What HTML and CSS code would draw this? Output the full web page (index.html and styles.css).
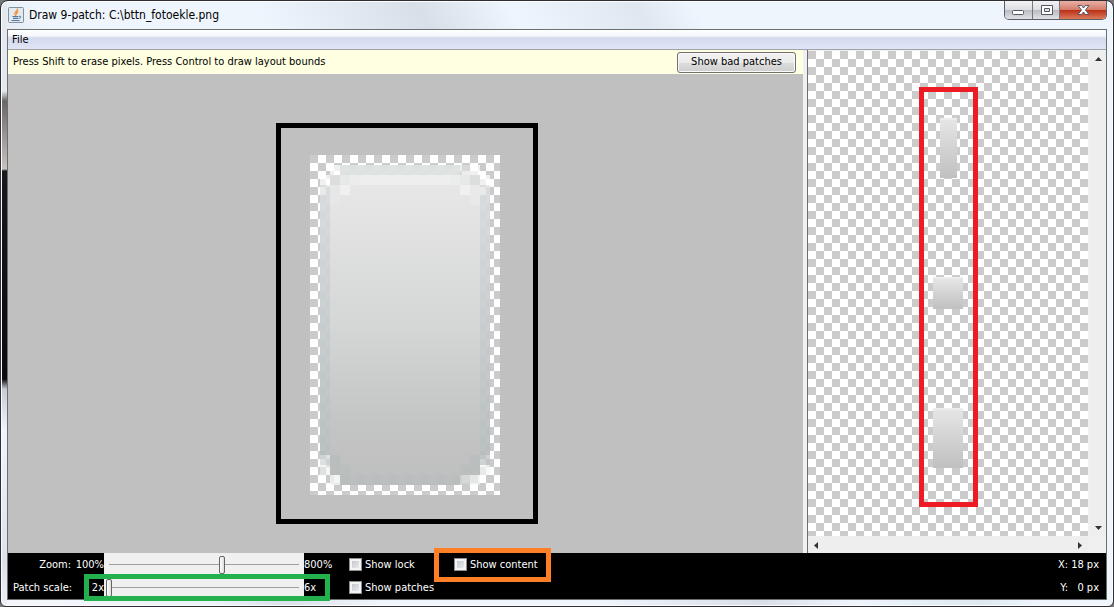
FILE: index.html
```html
<!DOCTYPE html>
<html lang="en">
<head>
  <meta charset="UTF-8">
  <title>Draw 9-patch: C:\bttn_fotoekle.png</title>
  <link rel="stylesheet" href="styles.css">
</head>
<body>
  <div class="window">
    <header class="titlebar">
      <svg class="app-icon" viewBox="0 0 16 16" width="16" height="16">
        <rect x="0.5" y="0.5" width="15" height="15" rx="1" fill="#e4ebf0" stroke="#7d92a3"/>
        <path d="M9.500 1.500C10.500 4 5.500 5 7 7.500L8 9M10.500 4.500C8 5.500 8.500 6.500 9 7.500" fill="none" stroke="#f08a24" stroke-width="1.300"/>
        <path d="M4.500 9.500h6M5 11.300h5M3.500 13.500h8" fill="none" stroke="#50789a" stroke-width="1.200"/>
        <path d="M11 9.300c2.500-.6 2.500 2-.5 2.200" fill="none" stroke="#50789a"/>
      </svg>
      <h1>Draw 9-patch: C:\bttn_fotoekle.png</h1>
      <div class="window-buttons">
        <button class="minimize" aria-label="Minimize">
          <svg viewBox="0 0 13 11" width="13" height="11"><rect x="0.500" y="5.500" width="11" height="4" rx="1" fill="#fff" stroke="#535666"/></svg>
        </button>
        <button class="maximize" aria-label="Maximize">
          <svg viewBox="0 0 13 11" width="13" height="11"><path d="M1.500 0.500h11v9h-11z" fill="#fff" stroke="#535666"/><path d="M4.500 3.500h5v3h-5z" fill="#dfe3ea" stroke="#535666"/></svg>
        </button>
        <button class="close" aria-label="Close">
          <svg viewBox="0 0 13 11" width="13" height="11"><path d="M1 .5h3.500L6.500 3 8.500.5H12L8.500 5l3.500 4.500H8.500L6.500 7l-2 2.500H1L4.500 5z" fill="#fff" stroke="#535666"/></svg>
        </button>
      </div>
    </header>

    <div class="client">
      <nav class="menubar">
        <button>File</button>
      </nav>

      <main class="workspace">
        <section class="editor">
          <div class="hint">
            <p>Press Shift to erase pixels. Press Control to draw layout bounds</p>
            <button class="bad-patches">Show bad patches</button>
          </div>
          <div class="stage">
            <div class="canvas checker">
              <svg viewBox="0 0 19 34" width="190" height="340" shape-rendering="crispEdges">
                <defs>
                  <linearGradient id="body" x1="0" y1="0" x2="0" y2="1">
                    <stop offset="0" stop-color="#e7e7e7"/>
                    <stop offset="0.500" stop-color="#d5d6d6"/>
                    <stop offset="0.850" stop-color="#c3c5c4"/>
                    <stop offset="1" stop-color="#c0c0c0"/>
                  </linearGradient>
                  <linearGradient id="edge" x1="0" y1="0" x2="0" y2="1">
                    <stop offset="0" stop-color="#d7dbdd"/>
                    <stop offset="1" stop-color="#b8bdbe"/>
                  </linearGradient>
                </defs>
                <!-- body and side edges -->
                <rect x="2" y="3" width="15" height="28" fill="url(#body)"/>
                <rect x="1" y="4" width="1" height="26" fill="url(#edge)" opacity="0.950"/>
                <rect x="17" y="4" width="1" height="26" fill="url(#edge)" opacity="0.950"/>
                <!-- top -->
                <rect x="3" y="1" width="12" height="1" fill="#dde1df" opacity="0.950"/>
                <rect x="2" y="1" width="1" height="1" fill="#fff" opacity="0.700"/>
                <rect x="15" y="1" width="1" height="1" fill="#e0e3e2" opacity="0.600"/>
                <rect x="16" y="1" width="1" height="1" fill="#fff" opacity="0.700"/>
                <rect x="2" y="2" width="15" height="1" fill="#dcdedd"/>
                <rect x="3" y="2" width="13" height="1" fill="#e6e9e8"/>
                <rect x="4" y="2" width="11" height="1" fill="#ebeded"/>
                <rect x="5" y="2" width="9" height="1" fill="#eee"/>
                <rect x="1" y="2" width="1" height="1" fill="#fff" opacity="0.700"/>
                <rect x="17" y="2" width="1" height="1" fill="#fff" opacity="0.700"/>
                <rect x="1" y="3" width="1" height="1" fill="#e0e2e1" opacity="0.700"/>
                <rect x="17" y="3" width="1" height="1" fill="#e0e2e1" opacity="0.700"/>
                <rect x="2" y="3" width="1" height="2" fill="#e6e7e7"/>
                <rect x="16" y="3" width="1" height="2" fill="#e9e9e9"/>
                <rect x="3" y="3" width="1" height="1" fill="#f0f0f0"/>
                <rect x="15" y="3" width="1" height="1" fill="#f0f0f0"/>
                <!-- bottom -->
                <rect x="1" y="30" width="1" height="1" fill="#d0d4d4" opacity="0.700"/>
                <rect x="17" y="30" width="1" height="1" fill="#bcc0c0" opacity="0.700"/>
                <rect x="2" y="30" width="1" height="2" fill="#b9bebd"/>
                <rect x="16" y="30" width="1" height="1" fill="#babebe"/>
                <rect x="1" y="31" width="1" height="1" fill="#ecf0ee" opacity="0.600"/>
                <rect x="3" y="31" width="13" height="1" fill="#bfc0c0"/>
                <rect x="3" y="31" width="1" height="1" fill="#babebc"/>
                <rect x="15" y="31" width="2" height="1" fill="#babebd"/>
                <rect x="17" y="31" width="1" height="1" fill="#f4f6f5" opacity="0.700"/>
                <rect x="2" y="32" width="1" height="1" fill="#f0f4f2" opacity="0.800"/>
                <rect x="3" y="32" width="12" height="1" fill="#b7bcbc" opacity="0.950"/>
                <rect x="15" y="32" width="1" height="1" fill="#ccd0ce" opacity="0.800"/>
                <rect x="16" y="32" width="1" height="1" fill="#eef2f0" opacity="0.700"/>
              </svg>
              <div class="mark mark-black"></div>
            </div>
          </div>
        </section>

        <section class="preview">
          <div class="preview-area checker">
            <div class="patch patch-tall"></div>
            <div class="patch patch-wide"></div>
            <div class="patch patch-both"></div>
            <div class="mark mark-red"></div>
          </div>
          <div class="scroll scroll-y">
            <button aria-label="Scroll up"><svg viewBox="0 0 7 4" width="7" height="4"><path d="M0 4L3.500 0 7 4z"/></svg></button>
            <button aria-label="Scroll down"><svg viewBox="0 0 7 4" width="7" height="4"><path d="M0 0h7L3.500 4z"/></svg></button>
          </div>
          <div class="scroll scroll-x">
            <button aria-label="Scroll left"><svg viewBox="0 0 4 7" width="4" height="7"><path d="M4 0v7L0 3.500z"/></svg></button>
            <button aria-label="Scroll right"><svg viewBox="0 0 4 7" width="4" height="7"><path d="M0 0l4 3.500L0 7z"/></svg></button>
          </div>
        </section>
      </main>

      <footer class="controls">
        <div class="sliders">
          <label for="zoom">Zoom:</label>
          <span class="min">100%</span>
          <div class="slider"><input type="range" id="zoom" min="100" max="800" value="518"></div>
          <span>800%</span>
          <label for="scale">Patch scale:</label>
          <span class="min">2x</span>
          <div class="slider"><input type="range" id="scale" min="2" max="6" value="2"></div>
          <span>6x</span>
          <div class="mark mark-green"></div>
        </div>
        <div class="checks">
          <label><input type="checkbox">Show lock</label>
          <label><input type="checkbox">Show content<span class="mark mark-orange"></span></label>
          <label><input type="checkbox">Show patches</label>
        </div>
        <div class="position">
          <span>X:</span><span>18 px</span>
          <span>Y:</span><span>0 px</span>
        </div>
      </footer>
    </div>
  </div>
</body>
</html>
```
FILE: styles.css
```css
* {
  box-sizing: border-box;
}

body {
  margin: 0;
  background: #777;
  color: #000;
  font-family: "DejaVu Sans Condensed", "Noto Sans", sans-serif;
  font-size: 11px;
  line-height: 14px;
}

button {
  font: inherit;
  color: inherit;
  padding: 0;
  border: none;
  background: none;
}

.window {
  height: 100vh;
  display: flex;
  flex-direction: column;
  padding: 0 6px 6px;
  border: 1px solid #2e2e33;
  border-radius: 8px 8px 6px 6px;
  background:
    linear-gradient(#e4e9ef 0, #e4e9ef 90px, #6b6666 100px, #c9c3bf 168px, #1c181b 170px, #0b0a0e 378px, #c6cad6 388px, #f0f4fd 430px, #dde1e9 560px, #eef2f8 607px) left / 6px 100% no-repeat,
    linear-gradient(60deg, #f4f6fa 0, #eef4fc 180px, #dde2ea 250px, #eef5fd 330px, #eef5fd 520px, #d8dfe8 660px, #eef5fd 740px, #dfe7f0 850px, #eef5fd 900px);
  box-shadow: inset 0 0 0 1px #fbfcff;
}

.titlebar {
  height: 28px;
  display: flex;
  align-items: center;
  padding-left: 1px;
}

.titlebar h1 {
  flex: 1;
  margin: 0 0 0 5px;
  font-size: 12px;
  font-weight: normal;
  line-height: 16px;
}

.window-buttons {
  align-self: flex-start;
  display: flex;
  height: 19px;
  border: 1px solid #5c5f69;
  border-top: none;
  border-radius: 0 0 5px 5px;
  overflow: hidden;
}

.window-buttons button {
  width: 28px;
  display: flex;
  align-items: center;
  justify-content: center;
  border-right: 1px solid #73767f;
  background: linear-gradient(#f2f2f4 0, #dcdde0 50%, #b9bbc1 50%, #dfe1e6 100%);
}

.window-buttons .maximize {
  width: 27px;
}

.window-buttons .close {
  width: 46px;
  border-right: none;
  background: linear-gradient(#e9b1a4 0, #d37a68 50%, #b92d15 50%, #dd7a5c 100%);
}

.client {
  flex: 1;
  min-height: 0;
  display: flex;
  flex-direction: column;
  border: 1px solid #6c6f70;
}

.menubar {
  height: 20px;
  padding: 0 4px;
  border-bottom: 1px solid #a0a2a8;
  background: linear-gradient(#fff 0, #f4f6fb 6px, #d4daed 8px, #e1e6f6 100%);
}

.menubar button {
  height: 19px;
}

.workspace {
  flex: 1;
  min-height: 0;
  display: flex;
  background: #f0f0f0;
}

.editor {
  flex: 1;
  display: flex;
  flex-direction: column;
}

.hint {
  height: 24px;
  display: flex;
  align-items: center;
  justify-content: space-between;
  padding: 0 7px 0 5px;
  background: #ffffe1;
}

.hint p {
  margin: 0;
  line-height: 16px;
}

.bad-patches {
  width: 119px;
  height: 21px;
  border: 1px solid #707070;
  border-radius: 3px;
  background: linear-gradient(#f2f2f2 0, #ebebeb 50%, #dddddd 50%, #cfcfcf 100%);
  box-shadow: inset 0 0 0 1px #fafafa;
}

.stage {
  flex: 1;
  display: flex;
  align-items: center;
  justify-content: center;
  padding: 23px 1px 0 0;
  background: #c0c0c0;
}

.checker {
  background: repeating-conic-gradient(#fff 0 25%, #cbcbcb 0 50%) 0 0 / 16px 16px;
}

.canvas {
  position: relative;
}

.canvas svg {
  display: block;
}

/* highlight frames drawn over the interface */
.mark {
  position: absolute;
  border: 5px solid;
  pointer-events: none;
}

.mark-black {
  inset: -32px -38px -29px -34px;
  border-color: #000;
}

.mark-red {
  top: 36px;
  bottom: 29px;
  left: 50%;
  width: 59px;
  margin-left: -29px;
  border-color: #ed1c24;
}

.mark-green {
  top: 21px;
  left: 71px;
  right: 2px;
  height: 27px;
  border-color: #22b14c;
}

.mark-orange {
  inset: -10px -13px -10px -20px;
  border-color: #ff7f27;
}

.preview {
  width: 299px;
  margin-left: 4px;
  display: grid;
  grid-template-columns: 1fr 16px;
  grid-template-rows: 1fr 16px;
  gap: 1px 2px;
  padding-top: 1px;
  border-left: 1px solid #6c6f70;
}

.preview-area {
  position: relative;
  display: flex;
  flex-direction: column;
  align-items: center;
  gap: 99px;
  padding-top: 67px;
}

.patch {
  width: 30px;
  height: 60px;
  border-top: 2px solid #ececec;
  background: linear-gradient(#e5e5e5, #c0c0c0);
}

.patch-tall {
  width: 17px;
}

.patch-wide {
  height: 32px;
}

.scroll {
  display: flex;
  justify-content: space-between;
  background: #eee;
}

.scroll-y {
  flex-direction: column;
}

.scroll button {
  width: 16px;
  height: 16px;
  display: flex;
  align-items: center;
  justify-content: center;
  fill: #333;
}

.controls {
  display: flex;
  justify-content: space-between;
  padding: 0 7px 0 5px;
  background: #000;
  color: #fff;
  white-space: nowrap;
}

.sliders {
  position: relative;
  display: grid;
  grid-template-columns: 58px 33px 200px 28px;
  grid-auto-rows: 23px;
  align-items: center;
}

.sliders label,
.min {
  text-align: right;
}

.slider {
  height: 23px;
  padding: 0 2px;
  background: #f0f0f0;
}

.slider input {
  display: block;
  width: 100%;
  height: 23px;
  margin: 0;
  appearance: none;
  background: linear-gradient(#a0a0a0, #a0a0a0) center 11px / calc(100% - 6px) 1px no-repeat;
}

.slider input::-webkit-slider-thumb {
  appearance: none;
  width: 6px;
  height: 18px;
  border: 1px solid #666;
  border-radius: 2px;
  background: linear-gradient(90deg, #fff, #ddd);
}

.checks {
  flex: 1;
  display: grid;
  grid-template-columns: 105px 105px;
  grid-auto-rows: 23px;
  align-items: center;
  justify-content: start;
  padding-left: 17px;
}

.checks label {
  position: relative;
  display: flex;
  align-items: center;
  justify-self: start;
}

.checks input {
  appearance: none;
  width: 13px;
  height: 13px;
  margin: 0 3px 0 0;
  border: 1px solid #8e8f8f;
  background: linear-gradient(135deg, #b9bec5, #f4f4f4);
  box-shadow: inset 0 0 0 2px #f4f4f4;
}

.position {
  display: grid;
  grid-template-columns: auto auto;
  grid-auto-rows: 23px;
  column-gap: 3px;
  align-items: center;
  text-align: right;
}
```
